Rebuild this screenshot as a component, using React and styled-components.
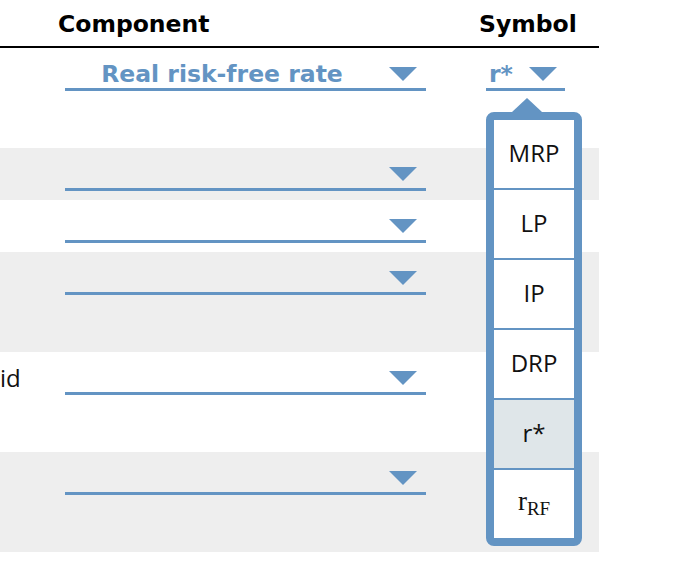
import React from 'react';
import styled, { createGlobalStyle } from 'styled-components';

const BLUE = '#6394c3';

const GlobalStyle = createGlobalStyle`
  html, body {
    margin: 0;
    padding: 0;
    background: #ffffff;
  }
  body {
    font-family: "Open Sans", "Noto Sans", sans-serif;
    color: #111111;
  }
`;

const Table = styled.div`
  width: 599px;
  display: flex;
  flex-direction: column;
`;

const HeaderRow = styled.div`
  display: grid;
  grid-template-columns: 58px 421px 120px;
  padding: 10px 0 8px;
  border-bottom: 2px solid #000000;
`;

const HeaderCell = styled.div`
  font-family: "DejaVu Sans", Verdana, sans-serif;
  font-weight: bold;
  font-size: 23.5px;
  line-height: 28px;
  color: #000000;
`;

const Row = styled.div`
  display: grid;
  grid-template-columns: 65px 361px 60px 113px;
  align-items: start;
  box-sizing: border-box;
  min-height: ${(p) => (p.$tall ? '100px' : '52px')};
  padding-top: 12px;
  background: ${(p) => (p.$shaded ? '#eeeeee' : '#ffffff')};
`;

const Label = styled.div`
  font-family: "Open Sans", "Noto Sans", sans-serif;
  font-size: 24px;
  line-height: 28px;
  color: #111111;
  white-space: nowrap;
`;

const SymbolCell = styled.div`
  grid-column: 4;
  position: relative;
`;

const Select = styled.div`
  display: flex;
  align-items: center;
  height: 28px;
  border-bottom: 3px solid ${BLUE};
  width: ${(p) => p.$width};
  cursor: pointer;
`;

const Value = styled.span`
  flex: 1;
  font-family: "DejaVu Sans", Verdana, sans-serif;
  font-weight: bold;
  font-size: 23.5px;
  line-height: 28px;
  color: ${BLUE};
  text-align: ${(p) => (p.$left ? 'left' : 'center')};
  padding-left: ${(p) => (p.$left ? '3px' : '0')};
  padding-right: ${(p) => (p.$left ? '0' : '10px')};
  white-space: nowrap;
`;

const ArrowWrap = styled.span`
  display: flex;
  margin-right: ${(p) => p.$gap}px;
`;

const Arrow = ({ gap = 9 }) => (
  <ArrowWrap $gap={gap}>
    <svg width="28" height="14" viewBox="0 0 28 14">
      <polygon points="0,0 28,0 14,14" fill={BLUE} />
    </svg>
  </ArrowWrap>
);

const Popup = styled.div`
  position: absolute;
  top: 38px;
  left: 0;
  z-index: 10;
  display: flex;
  flex-direction: column;
`;

const Caret = styled.svg`
  display: block;
  margin-left: 26px;
`;

const Menu = styled.ul`
  list-style: none;
  margin: 0;
  padding: 0;
  width: 80px;
  border: 8px solid ${BLUE};
  border-radius: 8px;
  background: #ffffff;
`;

const Option = styled.li`
  display: flex;
  align-items: center;
  justify-content: center;
  padding-bottom: 3px;
  box-sizing: border-box;
  font-family: "Open Sans", "Noto Sans", sans-serif;
  font-size: 24px;
  color: #111111;
  background: ${(p) => (p.$selected ? '#dfe6e9' : '#ffffff')};
  border-bottom: 2px solid ${BLUE};
  height: 70px;

  &:last-child {
    border-bottom: none;
    height: 68px;
  }
`;

const MathR = styled.span`
  font-family: "Liberation Serif", "Times New Roman", serif;
  font-size: 27px;
  color: #111111;

  sub {
    font-size: 19px;
    vertical-align: -5px;
  }
`;

const options = [
  { key: 'MRP', label: 'MRP' },
  { key: 'LP', label: 'LP' },
  { key: 'IP', label: 'IP' },
  { key: 'DRP', label: 'DRP' },
  { key: 'r*', label: 'r*', selected: true },
  {
    key: 'rRF',
    label: (
      <MathR>
        r<sub>RF</sub>
      </MathR>
    ),
  },
];

const rows = [
  { tall: false, shaded: true, label: '' },
  { tall: false, shaded: false, label: '' },
  { tall: true, shaded: true, label: '' },
  { tall: true, shaded: false, label: 'id' },
  { tall: true, shaded: true, label: '' },
];

const App = () => {
  return (
    <>
      <GlobalStyle />
      <Table>
        <HeaderRow>
          <span />
          <HeaderCell>Component</HeaderCell>
          <HeaderCell>Symbol</HeaderCell>
        </HeaderRow>

        <Row $tall>
          <Label />
          <Select $width="361px">
            <Value>Real risk-free rate</Value>
            <Arrow gap={9} />
          </Select>
          <SymbolCell>
            <Select $width="79px">
              <Value $left>r*</Value>
              <Arrow gap={8} />
            </Select>
            <Popup>
              <Caret width="30" height="14" viewBox="0 0 30 14">
                <polygon points="0,14 15,0 30,14" fill={BLUE} />
              </Caret>
              <Menu>
                {options.map((o) => (
                  <Option key={o.key} $selected={o.selected}>
                    {o.label}
                  </Option>
                ))}
              </Menu>
            </Popup>
          </SymbolCell>
        </Row>

        {rows.map((r, i) => (
          <Row key={i} $tall={r.tall} $shaded={r.shaded}>
            <Label>{r.label}</Label>
            <Select $width="361px">
              <Value />
              <Arrow gap={9} />
            </Select>
          </Row>
        ))}
      </Table>
    </>
  );
};

export default App;
